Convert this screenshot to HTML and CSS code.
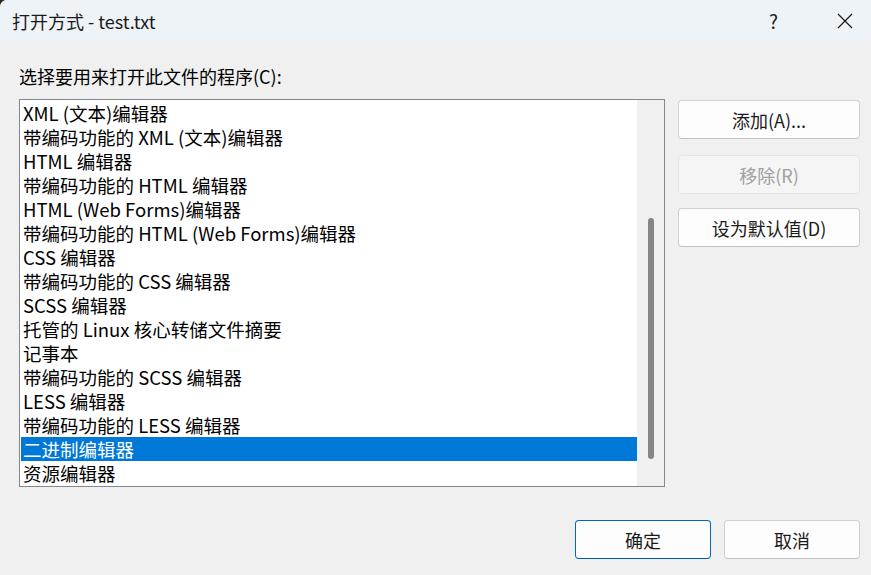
FILE: index.html
```html
<!DOCTYPE html>
<html>
<head>
    <title>打开方式 - test.txt</title>
    <link rel="stylesheet" href="styles.css">
</head>
<body>
    <div class="window">
        <div class="titlebar">
            <span class="title">打开方式 - test.txt</span>
            <span class="help">?</span>
            <span class="close">
                <svg width="16" height="16" viewBox="0 0 16 16">
                    <path d="M1 1 L15 15 M15 1 L1 15" stroke="#1a1a1a" stroke-width="1.2" fill="none"/>
                </svg>
            </span>
        </div>

        <div class="content">
            <div class="label">选择要用来打开此文件的程序(C):</div>

            <div class="main">
                <div class="listbox">
                    <div class="items">
                        <div class="item">XML (文本)编辑器</div>
                        <div class="item">带编码功能的 XML (文本)编辑器</div>
                        <div class="item">HTML 编辑器</div>
                        <div class="item">带编码功能的 HTML 编辑器</div>
                        <div class="item">HTML (Web Forms)编辑器</div>
                        <div class="item">带编码功能的 HTML (Web Forms)编辑器</div>
                        <div class="item">CSS 编辑器</div>
                        <div class="item">带编码功能的 CSS 编辑器</div>
                        <div class="item">SCSS 编辑器</div>
                        <div class="item">托管的 Linux 核心转储文件摘要</div>
                        <div class="item">记事本</div>
                        <div class="item">带编码功能的 SCSS 编辑器</div>
                        <div class="item">LESS 编辑器</div>
                        <div class="item">带编码功能的 LESS 编辑器</div>
                        <div class="item selected">二进制编辑器</div>
                        <div class="item">资源编辑器</div>
                    </div>
                    <div class="scrollbar">
                        <div class="thumb"></div>
                    </div>
                </div>

                <div class="side">
                    <button class="btn add">添加(A)...</button>
                    <button class="btn remove" disabled>移除(R)</button>
                    <button class="btn default">设为默认值(D)</button>
                </div>
            </div>

            <div class="footer">
                <button class="btn ok">确定</button>
                <button class="btn">取消</button>
            </div>
        </div>
    </div>
</body>
</html>
```

FILE: styles.css
```css
html {
    background: #2b2b2b;
}
body {
    margin: 0;
    font-family: "Noto Sans CJK SC", "Noto Sans", sans-serif;
    color: #000;
}
.window {
    width: 871px;
    height: 575px;
    background: #f0f0f0;
    border-top-left-radius: 7px;
    overflow: hidden;
}
.titlebar {
    height: 41px;
    background: #eef3f8;
    display: flex;
    align-items: center;
    padding-left: 12px;
    box-sizing: border-box;
}
.title {
    font-size: 18px;
    color: #1a1a1a;
    flex: 1;
}
.help {
    font-size: 19px;
    color: #1a1a1a;
    width: 16px;
    margin-right: 52px;
}
.close {
    width: 16px;
    height: 16px;
    margin-right: 18px;
    display: flex;
}
.content {
    padding: 23px 11px 0 19px;
}
.label {
    font-size: 18px;
    line-height: 24px;
    height: 24px;
}
.main {
    display: flex;
    margin-top: 11px;
}
.listbox {
    width: 646px;
    height: 388px;
    box-sizing: border-box;
    border: 1px solid #828790;
    background: #fff;
    display: flex;
}
.items {
    flex: 1;
    padding: 1px 0 0 1px;
}
.item {
    height: 24px;
    line-height: 24px;
    font-size: 18.5px;
    padding-left: 2px;
    white-space: nowrap;
}
.item.selected {
    background: #0078d7;
    color: #fff;
}
.scrollbar {
    width: 27px;
    background: #f0f0f0;
    padding: 118px 0 0 11px;
    box-sizing: border-box;
}
.thumb {
    width: 6px;
    height: 241px;
    background: #858585;
    border-radius: 3px;
}
.side {
    display: flex;
    flex-direction: column;
    margin-left: 13px;
    padding-top: 1px;
}
.btn {
    width: 182px;
    height: 39px;
    box-sizing: border-box;
    background: #fdfdfd;
    border: 1px solid #d0d0d0;
    border-bottom-color: #c2c2c2;
    border-radius: 4px;
    font-family: inherit;
    font-size: 18px;
    color: #1a1a1a;
    padding: 0;
}
.remove {
    margin-top: 16px;
    background: #f5f5f5;
    border-color: #e5e5e5;
    color: #a0a0a0;
}
.default {
    margin-top: 14px;
}
.footer {
    display: flex;
    justify-content: flex-end;
    gap: 13px;
    margin-top: 33px;
}
.footer .btn {
    width: 136px;
}
.footer .ok {
    border: 1px solid #0067c0;
    border-bottom-color: #0058a8;
}
```
